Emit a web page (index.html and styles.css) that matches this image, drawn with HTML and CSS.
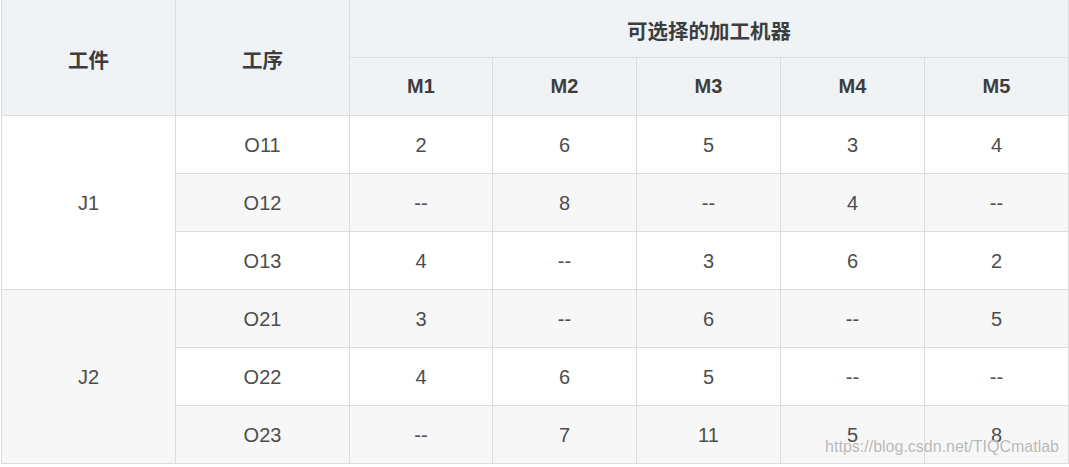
FILE: index.html
```html
<!DOCTYPE html>
<html lang="zh">
<head>
<meta charset="utf-8">
<title>可选择的加工机器</title>
<link rel="stylesheet" href="styles.css">
</head>
<body>
<div class="wrap">
  <table class="grid">
    <colgroup>
      <col class="c-job"><col class="c-op">
      <col class="c-m1"><col class="c-m"><col class="c-m"><col class="c-m"><col class="c-m">
    </colgroup>
    <thead>
      <tr>
        <th rowspan="2" class="cjk">工件</th>
        <th rowspan="2" class="cjk">工序</th>
        <th colspan="5" class="cjk">可选择的加工机器</th>
      </tr>
      <tr>
        <th>M1</th><th>M2</th><th>M3</th><th>M4</th><th>M5</th>
      </tr>
    </thead>
    <tbody>
      <tr><td rowspan="3" class="job">J1</td><td>O11</td><td>2</td><td>6</td><td>5</td><td>3</td><td>4</td></tr>
      <tr class="alt"><td>O12</td><td>--</td><td>8</td><td>--</td><td>4</td><td>--</td></tr>
      <tr><td>O13</td><td>4</td><td>--</td><td>3</td><td>6</td><td>2</td></tr>
      <tr class="alt"><td rowspan="3" class="job">J2</td><td>O21</td><td>3</td><td>--</td><td>6</td><td>--</td><td>5</td></tr>
      <tr><td>O22</td><td>4</td><td>6</td><td>5</td><td>--</td><td>--</td></tr>
      <tr class="alt"><td>O23</td><td>--</td><td>7</td><td>11</td><td>5</td><td>8</td></tr>
    </tbody>
  </table>
  <div class="watermark">https://blog.csdn.net/TIQCmatlab</div>
</div>
</body>
</html>
```

FILE: styles.css
```css
html, body {
  margin: 0;
  padding: 0;
  background: #ffffff;
}

.wrap {
  position: relative;
  width: 1069px;
  height: 467px;
  overflow: hidden;
  padding-left: 1px;
  box-sizing: border-box;
}

.grid {
  border-collapse: collapse;
  table-layout: fixed;
  width: 1068px;
  margin-top: -1px;
  font-family: "Liberation Sans", Arial, "Noto Sans CJK SC", sans-serif;
  font-size: 20px;
}

.c-job { width: 174px; }
.c-op { width: 174px; }
.c-m1 { width: 143px; }
.c-m { width: 144px; }

.grid th,
.grid td {
  border: 1px solid #dcdcdc;
  height: 58px;
  padding: 0;
  text-align: center;
  vertical-align: middle;
  box-sizing: border-box;
}

.grid th {
  background: #eff3f6;
  color: #3d3d3d;
  font-weight: bold;
}

.grid th.cjk {
  font-size: 20.5px;
  padding-top: 2px;
}

.grid td {
  color: #4d4d4d;
  font-weight: normal;
  background: #ffffff;
  padding-top: 2px;
}

.grid tr.alt td {
  background: #f7f7f7;
}

.watermark {
  position: absolute;
  right: 10px;
  bottom: 11px;
  font-family: "Liberation Sans", Arial, sans-serif;
  font-size: 16px;
  color: rgba(160, 160, 160, 0.75);
  text-shadow: 0 0 1px #ffffff;
  white-space: nowrap;
}
```
